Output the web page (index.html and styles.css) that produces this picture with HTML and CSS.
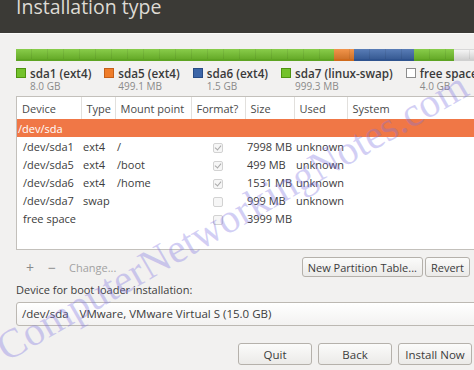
FILE: index.html
```html
<!DOCTYPE html>
<html lang="en">
<head>
    <meta charset="UTF-8">
    <title>Installation type</title>
    <link rel="stylesheet" href="styles.css">
</head>
<body>
    <div class="window">
        <header class="titlebar">
            <h1>Installation type</h1>
        </header>

        <main class="content">
            <!-- Disk usage bar -->
            <div class="disk-bar">
                <span class="seg ext4" style="flex-grow: 7998"></span>
                <span class="seg boot" style="flex-grow: 499"></span>
                <span class="seg home" style="flex-grow: 1531"></span>
                <span class="seg ext4" style="flex-grow: 999"></span>
                <span class="seg free" style="flex-grow: 3999"></span>
            </div>

            <ul class="legend">
                <li><span class="swatch ext4"></span><div><b>sda1 (ext4)</b><small>8.0 GB</small></div></li>
                <li><span class="swatch boot"></span><div><b>sda5 (ext4)</b><small>499.1 MB</small></div></li>
                <li><span class="swatch home"></span><div><b>sda6 (ext4)</b><small>1.5 GB</small></div></li>
                <li><span class="swatch ext4"></span><div><b>sda7 (linux-swap)</b><small>999.3 MB</small></div></li>
                <li><span class="swatch free"></span><div><b>free space</b><small>4.0 GB</small></div></li>
            </ul>

            <!-- Partition table -->
            <div class="table-box">
                <table class="parts">
                    <colgroup>
                        <col style="width: 64px">
                        <col style="width: 34px">
                        <col style="width: 76px">
                        <col style="width: 54px">
                        <col style="width: 49px">
                        <col style="width: 53px">
                        <col>
                    </colgroup>
                    <thead>
                        <tr><th>Device</th><th>Type</th><th>Mount point</th><th>Format?</th><th>Size</th><th>Used</th><th>System</th></tr>
                    </thead>
                    <tbody>
                        <tr class="disk"><td colspan="7">/dev/sda</td></tr>
                        <tr><td class="dev">/dev/sda1</td><td>ext4</td><td>/</td><td class="fmt"><span class="check on"></span></td><td>7998 MB</td><td>unknown</td><td></td></tr>
                        <tr><td class="dev">/dev/sda5</td><td>ext4</td><td>/boot</td><td class="fmt"><span class="check on"></span></td><td>499 MB</td><td>unknown</td><td></td></tr>
                        <tr><td class="dev">/dev/sda6</td><td>ext4</td><td>/home</td><td class="fmt"><span class="check on"></span></td><td>1531 MB</td><td>unknown</td><td></td></tr>
                        <tr><td class="dev">/dev/sda7</td><td>swap</td><td></td><td class="fmt"><span class="check"></span></td><td>999 MB</td><td>unknown</td><td></td></tr>
                        <tr><td class="dev">free space</td><td></td><td></td><td class="fmt"><span class="check"></span></td><td>3999 MB</td><td></td><td></td></tr>
                    </tbody>
                </table>
            </div>

            <div class="tools">
                <span class="tool">+</span>
                <span class="tool">&minus;</span>
                <span class="tool change">Change...</span>
                <div class="tools-right">
                    <button class="btn">New Partition Table...</button>
                    <button class="btn">Revert</button>
                </div>
            </div>

            <p class="boot-label">Device for boot loader installation:</p>
            <div class="combo"><span class="combo-dev">/dev/sda</span>VMware, VMware Virtual S (15.0 GB)</div>

            <div class="actions">
                <button class="btn big">Quit</button>
                <button class="btn big">Back</button>
                <button class="btn big">Install Now</button>
            </div>
        </main>

        <div class="watermark">ComputerNetworkingNotes.com</div>
    </div>
</body>
</html>
```

FILE: styles.css
```css
/* General Reset */
* {
    margin: 0;
    padding: 0;
    box-sizing: border-box;
}

body {
    background-color: #f2f1f0;
    color: #3c3c3c;
    font-family: "Open Sans", "DejaVu Sans", sans-serif;
    font-size: 11px;
    overflow: hidden;
}

.window {
    position: relative;
    width: 474px;
    height: 370px;
}

/* Title bar */
.titlebar {
    height: 34px;
    background-color: #3b3a36;
    border-bottom: 1px solid #fbfbfa;
    padding-left: 16px;
    overflow: hidden;
}

.titlebar h1 {
    font-size: 19.5px;
    font-weight: normal;
    line-height: 20px;
    margin-top: -3px;
    color: #dedbd4;
}

.content {
    padding: 0 2px 0 16px;
}

/* Disk bar */
.disk-bar {
    display: flex;
    width: 597px;
    height: 12px;
    margin-top: 15px;
}

.seg {
    flex-basis: 0;
    background-image: repeating-linear-gradient(90deg, transparent 0 15px, rgba(0, 0, 0, 0.07) 15px 16px),
        linear-gradient(#ffffff22, #00000022);
}

.seg.ext4 { background-color: #76c52f; border-bottom: 2px solid #5ea423; }
.seg.boot { background-color: #ef8430; border-bottom: 2px solid #cf6a1c; }
.seg.home { background-color: #4069ab; border-bottom: 2px solid #2f538e; }
.seg.free { background-color: #f3f3f3; border-top: 1px solid #d8d8d8; border-bottom: 2px solid #d0d0d0; }

/* Legend */
.legend {
    list-style: none;
    display: flex;
    gap: 13px;
    margin-top: 5px;
    white-space: nowrap;
}

.legend li {
    display: flex;
    gap: 4px;
}

.legend b {
    display: block;
    font-size: 11.7px;
    font-weight: 600;
    line-height: 14px;
    color: #3a3a3a;
}

.legend small {
    display: block;
    font-size: 10px;
    line-height: 12px;
    color: #8a8a8a;
}

.swatch {
    width: 10px;
    height: 10px;
    margin-top: 2px;
    border: 1px solid;
}

.swatch.ext4 { background: #73c22b; border-color: #4f9410; }
.swatch.boot { background: #ef7d2a; border-color: #c5601a; }
.swatch.home { background: #3d66a8; border-color: #294c86; }
.swatch.free { background: #fff; border-color: #8c8c8c; }

/* Partition table */
.table-box {
    width: 600px;
    height: 154px;
    margin-top: 4px;
    background: #fff;
    border: 1px solid #c3c0bb;
}

.parts {
    border-collapse: collapse;
    table-layout: fixed;
    width: 100%;
}

.parts th {
    height: 22px;
    padding: 0 5px;
    font-weight: normal;
    text-align: left;
    color: #4a4a4a;
    border-right: 1px solid #e2e0dd;
    white-space: nowrap;
}

.parts td {
    height: 18px;
    padding: 0 2px;
    white-space: nowrap;
    overflow: hidden;
}

.parts td.dev {
    padding-left: 6px;
}

.parts tr.disk td {
    background: #f07746;
    color: #fff;
    padding-left: 1px;
}

.parts td.fmt {
    text-align: center;
}

.check {
    display: inline-block;
    width: 10px;
    height: 10px;
    vertical-align: middle;
    border: 1px solid #d2d2d2;
    border-radius: 2px;
    background: #f6f6f6;
    position: relative;
}

.check.on::after {
    content: "";
    position: absolute;
    left: 2px;
    top: 0px;
    width: 3px;
    height: 5px;
    border-right: 1px solid #a9a9a9;
    border-bottom: 1px solid #a9a9a9;
    transform: rotate(40deg);
}

/* Tools under the table */
.tools {
    display: flex;
    align-items: center;
    height: 30px;
    margin-top: 2px;
    padding-left: 10px;
    padding-right: 2px;
}

.tool {
    color: #8a8a8a;
    font-size: 14px;
    margin-right: 14px;
}

.tool.change {
    font-size: 11px;
    color: #a2a2a2;
    margin-left: -1px;
}

.tools-right {
    display: flex;
    gap: 2px;
    margin-left: auto;
}

/* Buttons */
.btn {
    font-family: "Open Sans", "DejaVu Sans", sans-serif;
    font-size: 11px;
    color: #3c3c3c;
    height: 20px;
    padding: 0 5px;
    background: linear-gradient(#fbfbfa, #ebeae8);
    border: 1px solid #b5b1ab;
    border-radius: 3px;
}

.btn.big {
    height: 22px;
    width: 74px;
    font-size: 11.5px;
}

.boot-label {
    margin-top: 1px;
    line-height: 14px;
    color: #3c3c3c;
}

.combo {
    width: 600px;
    height: 24px;
    margin-top: 5px;
    padding-left: 5px;
    line-height: 22px;
    font-size: 11.5px;
    background: linear-gradient(#ffffff, #f3f2f1);
    border: 1px solid #bcb8b2;
    border-radius: 3px;
    white-space: nowrap;
}

.combo-dev {
    margin-right: 11px;
}

.actions {
    display: flex;
    justify-content: flex-end;
    gap: 6px;
    margin-top: 17px;
}

/* Watermark over the page */
.watermark {
    position: absolute;
    left: 232px;
    top: 216px;
    transform: translate(-50%, -50%) rotate(-30deg);
    font-family: "Liberation Serif", serif;
    font-size: 41px;
    color: rgba(125, 115, 225, 0.34);
    white-space: nowrap;
    pointer-events: none;
}
```
